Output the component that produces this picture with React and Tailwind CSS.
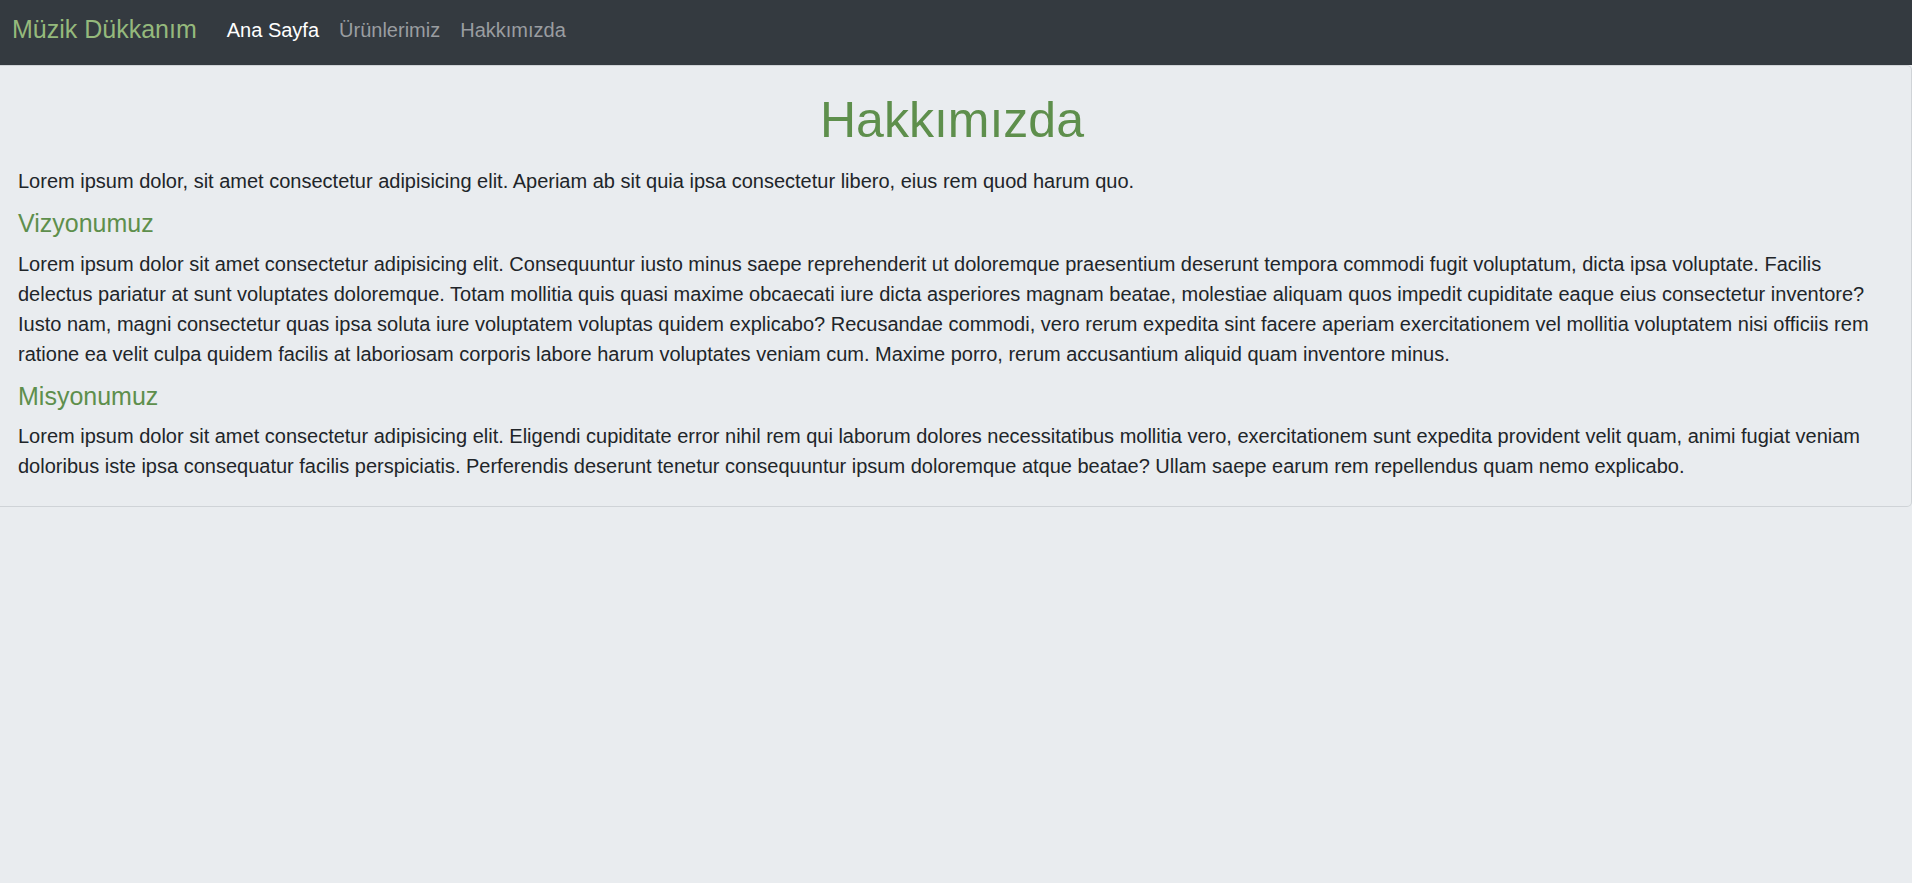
import React from 'react';

const links = [
  { label: 'Ana Sayfa', active: true },
  { label: 'Ürünlerimiz', active: false },
  { label: 'Hakkımızda', active: false },
];

const Navbar = () => (
  <nav className="h-[65px] bg-[#343a40] flex items-start pl-[12px] pr-[10px] pt-[11px]">
    <a href="#" className="text-[25px] leading-[37.5px] text-[#95b97c] mr-[20px] whitespace-nowrap">
      Müzik Dükkanım
    </a>
    <ul className="flex mt-[4px]">
      {links.map((l) => (
        <li key={l.label}>
          <a
            href="#"
            className={`block px-[10px] text-[20px] leading-[30px] ${
              l.active ? 'text-white' : 'text-[#9a9da0]'
            }`}
          >
            {l.label}
          </a>
        </li>
      ))}
    </ul>
  </nav>
);

const App = () => {
  return (
    <div className="min-h-screen bg-[#e9ecef] text-[#212529] font-['Liberation_Sans',Arial,sans-serif]">
      <Navbar />
      <div className="border-y border-r border-[#cfd3d7] rounded-r-[5px] pl-[18px] pr-[25px] pt-[24px] pb-[25px]">
        <h1 className="text-center text-[50px] leading-[60px] text-[#5e8f4c] mb-[16px]">Hakkımızda</h1>
        <p className="text-[20px] leading-[30px] mb-[12px]">
          Lorem ipsum dolor, sit amet consectetur adipisicing elit. Aperiam ab sit quia ipsa consectetur libero, eius rem quod harum quo.
        </p>
        <h5 className="text-[25px] leading-[30px] text-[#5e8f4c] mb-[11px]">Vizyonumuz</h5>
        <p className="text-[20px] leading-[30px] mb-[12px]">
          Lorem ipsum dolor sit amet consectetur adipisicing elit. Consequuntur iusto minus saepe reprehenderit ut doloremque praesentium deserunt tempora commodi fugit voluptatum, dicta ipsa voluptate. Facilis delectus pariatur at sunt voluptates doloremque. Totam mollitia quis quasi maxime obcaecati iure dicta asperiores magnam beatae, molestiae aliquam quos impedit cupiditate eaque eius consectetur inventore? Iusto nam, magni consectetur quas ipsa soluta iure voluptatem voluptas quidem explicabo? Recusandae commodi, vero rerum expedita sint facere aperiam exercitationem vel mollitia voluptatem nisi officiis rem ratione ea velit culpa quidem facilis at laboriosam corporis labore harum voluptates veniam cum. Maxime porro, rerum accusantium aliquid quam inventore minus.
        </p>
        <h5 className="text-[25px] leading-[30px] text-[#5e8f4c] mb-[10px]">Misyonumuz</h5>
        <p className="text-[20px] leading-[30px]">
          Lorem ipsum dolor sit amet consectetur adipisicing elit. Eligendi cupiditate error nihil rem qui laborum dolores necessitatibus mollitia vero, exercitationem sunt expedita provident velit quam, animi fugiat veniam doloribus iste ipsa consequatur facilis perspiciatis. Perferendis deserunt tenetur consequuntur ipsum doloremque atque beatae? Ullam saepe earum rem repellendus quam nemo explicabo.
        </p>
      </div>
    </div>
  );
};

export default App;
